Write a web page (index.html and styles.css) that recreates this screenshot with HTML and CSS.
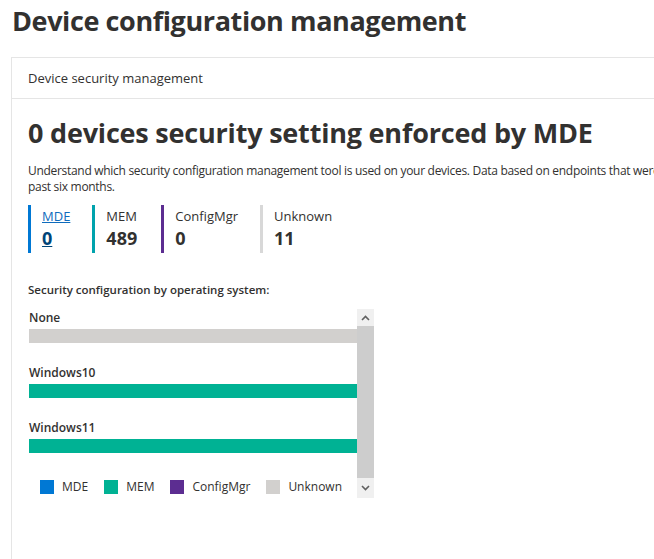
FILE: index.html
```html
<!DOCTYPE html>
<html>
<head>
<meta charset="utf-8">
<link rel="stylesheet" href="styles.css">
</head>
<body>
<h1 class="page-title">Device configuration management</h1>
<div class="card">
  <div class="card-header">Device security management</div>
  <div class="card-body">
    <h2 class="headline">0 devices security setting enforced by MDE</h2>
    <p class="desc">Understand which security configuration management tool is used on your devices. Data based on endpoints that were seen in the<br>past six months.</p>
    <div class="stats">
      <div class="stat stat-mde">
        <a class="stat-label link" href="#">MDE</a>
        <a class="stat-value link-value" href="#">0</a>
      </div>
      <div class="stat stat-mem">
        <span class="stat-label">MEM</span>
        <span class="stat-value">489</span>
      </div>
      <div class="stat stat-cm">
        <span class="stat-label">ConfigMgr</span>
        <span class="stat-value">0</span>
      </div>
      <div class="stat stat-unk">
        <span class="stat-label">Unknown</span>
        <span class="stat-value">11</span>
      </div>
    </div>
    <div class="chart-title">Security configuration by operating system:</div>
    <div class="chart">
      <div class="chart-content">
        <div class="group">
          <div class="group-label">None</div>
          <div class="bar bar-unk"></div>
        </div>
        <div class="group">
          <div class="group-label">Windows10</div>
          <div class="bar bar-mem"></div>
        </div>
        <div class="group">
          <div class="group-label">Windows11</div>
          <div class="bar bar-mem"></div>
        </div>
        <div class="legend">
          <span class="legend-item"><span class="swatch sw-mde"></span>MDE</span>
          <span class="legend-item"><span class="swatch sw-mem"></span>MEM</span>
          <span class="legend-item"><span class="swatch sw-cm"></span>ConfigMgr</span>
          <span class="legend-item"><span class="swatch sw-unk"></span>Unknown</span>
        </div>
      </div>
      <div class="scrollbar">
        <div class="sb-btn sb-up"><svg width="9" height="6" viewBox="0 0 9 6"><polyline points="1,5 4.5,1.5 8,5" fill="none" stroke="#606060" stroke-width="1.6"/></svg></div>
        <div class="sb-thumb"></div>
        <div class="sb-btn sb-down"><svg width="9" height="6" viewBox="0 0 9 6"><polyline points="1,1 4.5,4.5 8,1" fill="none" stroke="#606060" stroke-width="1.6"/></svg></div>
      </div>
    </div>
  </div>
</div>
</body>
</html>
```
FILE: styles.css
```css
html, body {
  margin: 0;
  padding: 0;
  background: #ffffff;
  overflow: hidden;
}
body {
  font-family: "Open Sans", "Noto Sans", sans-serif;
  color: #323130;
  width: 654px;
  height: 559px;
}
.page-title {
  margin: 1px 0 0 0;
  padding-left: 12px;
  font-size: 27px;
  letter-spacing: -0.4px;
  line-height: 40px;
  font-weight: 700;
  color: #323130;
  white-space: nowrap;
  height: 40px;
}
.card {
  margin: 16px 0 0 11px;
  width: 760px;
  height: 520px;
  border: 1px solid #e5e5e5;
  border-right: none;
  border-bottom: none;
}
.card-header {
  height: 40px;
  line-height: 40px;
  padding-left: 16px;
  font-size: 13px;
  border-bottom: 1px solid #e5e5e5;
}
.card-body {
  padding-left: 16px;
}
.headline {
  margin: 0;
  padding-top: 14px;
  font-size: 27px;
  letter-spacing: -0.2px;
  line-height: 40px;
  font-weight: 700;
  white-space: nowrap;
}
.desc {
  margin: 10px 0 0 0;
  font-size: 12px;
  letter-spacing: -0.3px;
  line-height: 16px;
  white-space: nowrap;
}
.stats {
  display: flex;
  gap: 22px;
  margin-top: 10px;
  height: 48px;
}
.stat {
  display: flex;
  flex-direction: column;
  border-left: 3px solid #0078d4;
  padding-left: 11px;
}
.stat-mem { border-left-color: #00a3ad; }
.stat-cm { border-left-color: #5c2d91; }
.stat-unk { border-left-color: #d8d8d8; }
.stat-label {
  font-size: 13px;
  line-height: 20px;
  padding-top: 1px;
}
.stat-value {
  font-size: 18px;
  line-height: 24px;
  font-weight: 700;
}
.stat-mem .stat-value { padding-right: 2px; }
.link {
  color: #0f6cbd;
  text-decoration: underline;
}
.link-value {
  color: #004578;
  text-decoration: underline;
}
.chart-title {
  margin-top: 29px;
  font-size: 11.5px;
  line-height: 16px;
  font-weight: 600;
}
.chart {
  display: flex;
  margin-top: 11px;
  margin-left: 1px;
  height: 189px;
}
.chart-content {
  width: 328px;
}
.group {
  padding-bottom: 21px;
}
.group-label {
  font-size: 12px;
  line-height: 17px;
  font-weight: 600;
  margin-bottom: 3px;
}
.bar {
  height: 14px;
}
.bar-unk { background: #d2d0ce; }
.bar-mem { background: #00b294; }
.legend {
  display: flex;
  gap: 16px;
  padding-left: 11px;
  margin-top: 6px;
  font-size: 12px;
  line-height: 14px;
}
.legend-item {
  display: flex;
  align-items: center;
  gap: 8px;
}
.swatch {
  width: 14px;
  height: 14px;
  display: inline-block;
}
.sw-mde { background: #0078d4; }
.sw-mem { background: #00b294; }
.sw-cm { background: #5c2d91; }
.sw-unk { background: #d2d0ce; }
.scrollbar {
  width: 17px;
  display: flex;
  flex-direction: column;
  background: #f0f0f0;
}
.sb-btn {
  display: flex;
  align-items: center;
  justify-content: center;
  background: #f0f0f0;
}
.sb-up { height: 17px; }
.sb-thumb {
  height: 152px;
  background: #cdcdcd;
}
.sb-down { flex: 1; }
```
